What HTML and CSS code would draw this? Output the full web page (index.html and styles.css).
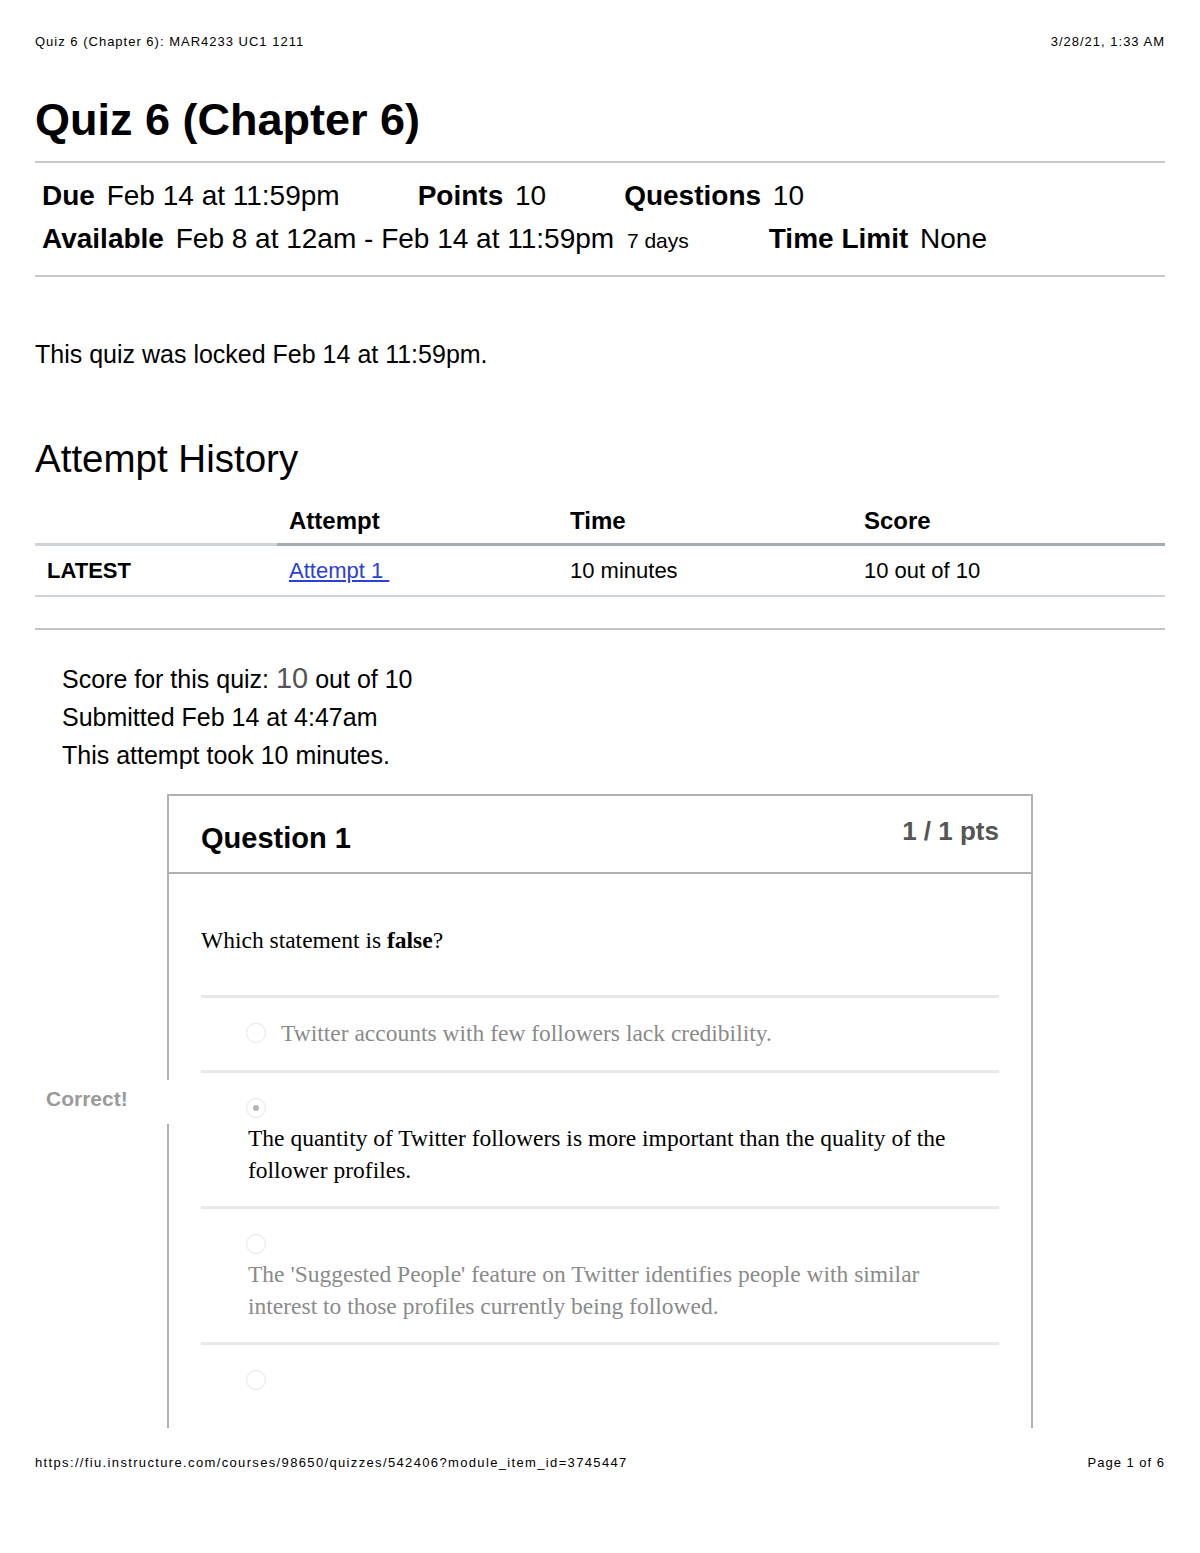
FILE: index.html
```html
<!DOCTYPE html>
<html lang="en">
<head>
  <meta charset="UTF-8" />
  <title>Quiz 6 (Chapter 6): MAR4233 UC1 1211</title>
  <link rel="stylesheet" href="styles.css">
</head>
<body>
  <div class="sheet">
    <div class="running-head">
      <span>Quiz 6 (Chapter 6): MAR4233 UC1 1211</span>
      <span>3/28/21, 1:33 AM</span>
    </div>

    <div class="content">
      <h1>Quiz 6 (Chapter 6)</h1>

      <div class="details">
        <div class="details-row">
          <span><b>Due</b> Feb 14 at 11:59pm</span>
          <span><b>Points</b> 10</span>
          <span><b>Questions</b> 10</span>
        </div>
        <div class="details-row">
          <span><b>Available</b> Feb 8 at 12am - Feb 14 at 11:59pm <small>7 days</small></span>
          <span><b>Time Limit</b> None</span>
        </div>
      </div>

      <p class="locked">This quiz was locked Feb 14 at 11:59pm.</p>

      <h2 class="history-title">Attempt History</h2>
      <table class="history">
        <thead>
          <tr>
            <th class="first"></th>
            <th>Attempt</th>
            <th>Time</th>
            <th>Score</th>
          </tr>
        </thead>
        <tbody>
          <tr>
            <td class="first"><b>LATEST</b></td>
            <td><a href="#">Attempt 1&nbsp;</a></td>
            <td>10 minutes</td>
            <td>10 out of 10</td>
          </tr>
        </tbody>
      </table>

      <hr class="rule">

      <div class="summary">
        <div>Score for this quiz: <span class="score-value">10</span> out of 10</div>
        <div>Submitted Feb 14 at 4:47am</div>
        <div>This attempt took 10 minutes.</div>
      </div>

      <div class="question">
        <div class="question-head">
          <h3>Question 1</h3>
          <span class="pts">1 / 1 pts</span>
        </div>
        <div class="question-body">
          <p class="question-text">Which statement is <b>false</b>?</p>

          <div class="answer muted first-answer">
            <span class="radio"></span>
            <span class="answer-text inline">Twitter accounts with few followers lack credibility.</span>
          </div>

          <div class="answer selected">
            <span class="answer-arrow">Correct!</span>
            <span class="radio checked"></span>
            <span class="answer-text">The quantity of Twitter followers is more important than the quality of the follower profiles.</span>
          </div>

          <div class="answer muted">
            <span class="radio"></span>
            <span class="answer-text">The 'Suggested People' feature on Twitter identifies people with similar interest to those profiles currently being followed.</span>
          </div>

          <div class="answer muted last-answer">
            <span class="radio"></span>
          </div>
        </div>
      </div>
    </div>
  </div>

  <div class="running-foot">
    <span class="url">https://fiu.instructure.com/courses/98650/quizzes/542406?module_item_id=3745447</span>
    <span>Page 1 of 6</span>
  </div>
</body>
</html>
```

FILE: styles.css
```css
body {
  margin: 0;
  font-family: "Liberation Sans", Arial, sans-serif;
  color: #000;
  background: white;
}
.sheet {
  height: 1428px;
  overflow: hidden;
}
.running-head, .running-foot {
  display: flex;
  justify-content: space-between;
  padding: 0 35px;
  font-size: 13px;
  line-height: 14px;
  letter-spacing: 1px;
}
.running-head {
  padding-top: 35px;
}
.running-foot {
  padding-top: 28px;
}
.running-foot .url {
  letter-spacing: 1.35px;
}
.content {
  padding: 0 35px;
}
h1 {
  margin: 45px 0 15px;
  font-size: 45px;
  line-height: 52px;
}
.details {
  border-top: 2px solid #c8c8c8;
  border-bottom: 2px solid #c8c8c8;
  padding: 11px 7px 13px;
  font-size: 28px;
  line-height: 43px;
}
.details-row {
  display: flex;
  gap: 78px;
}
.details-row + .details-row {
  gap: 80px;
}
.details b {
  margin-right: 4px;
}
.details small {
  font-size: 21px;
  margin-left: 5px;
}
.locked {
  margin: 63px 0 0;
  font-size: 25px;
  line-height: 28px;
}
.history-title {
  margin: 69px 0 0;
  font-size: 38.5px;
  line-height: 44px;
  font-weight: normal;
}
.history {
  width: 100%;
  margin-top: 26px;
  border-collapse: collapse;
  font-size: 22px;
}
.history th {
  text-align: left;
  font-size: 24px;
  line-height: 28px;
  padding: 0 10px 8px 12px;
  border-bottom: 3px solid #a3adb2;
}
.history th.first {
  border-bottom-color: #cdd3d6;
  width: 220px;
}
.history th:nth-child(2) { width: 259px; }
.history th:nth-child(3) { width: 272px; }
.history td {
  line-height: 22px;
  padding: 14px 10px 13px 12px;
  border-bottom: 2px solid #cdd3d6;
}
.history a {
  color: #2b3fd9;
}
.rule {
  margin: 31px 0 0;
  border: 0;
  border-top: 2px solid #c4c4c4;
}
.summary {
  margin-top: 29px;
  padding-left: 27px;
  font-size: 25px;
  line-height: 38px;
}
.score-value {
  font-size: 29px;
  color: #555;
}
.question {
  margin: 20px 0 0 132px;
  width: 862px;
  border: 2px solid #b0b0b0;
  border-bottom: 0;
  position: relative;
}
.question-head {
  height: 76px;
  display: flex;
  justify-content: space-between;
  align-items: flex-start;
  padding: 0 32px;
  border-bottom: 2px solid #b0b0b0;
}
.question-head h3 {
  margin: 24px 0 0;
  font-size: 29px;
  line-height: 36px;
}
.pts {
  margin-top: 20px;
  font-size: 26px;
  line-height: 30px;
  font-weight: bold;
  color: #555;
}
.question-body {
  padding: 53px 32px 0;
  font-family: "Liberation Serif", "Times New Roman", serif;
  font-size: 23.5px;
}
.question-text {
  margin: 0 0 42px;
  line-height: 26px;
}
.answer {
  position: relative;
  display: flex;
  flex-wrap: wrap;
  align-items: center;
  border-top: 3px solid #e8e8e8;
  padding: 25px 14px 20px 47px;
}
.answer.first-answer {
  padding-top: 22px;
  padding-bottom: 24px;
}
.answer.last-answer {
  padding-bottom: 80px;
}
.answer.muted {
  color: #8a8a8a;
}
.answer .radio {
  width: 18px;
  height: 18px;
  margin-left: -2px;
  border: 1px solid #e6e6e6;
  border-radius: 50%;
  position: relative;
}
.answer .radio.checked::after {
  content: "";
  position: absolute;
  left: 6px;
  top: 6px;
  width: 6px;
  height: 6px;
  border-radius: 50%;
  background: #b5b5b5;
}
.answer-text {
  line-height: 32px;
  margin-top: 4px;
}
.answer-text.inline {
  margin: 0 0 0 15px;
  line-height: 26px;
}
.answer-arrow {
  position: absolute;
  top: 7px;
  left: -163px;
  width: 123px;
  padding-left: 8px;
  height: 44px;
  line-height: 38px;
  background: white;
  font-family: "Liberation Sans", Arial, sans-serif;
  font-size: 21px;
  font-weight: bold;
  color: #9a9a9a;
}
```
